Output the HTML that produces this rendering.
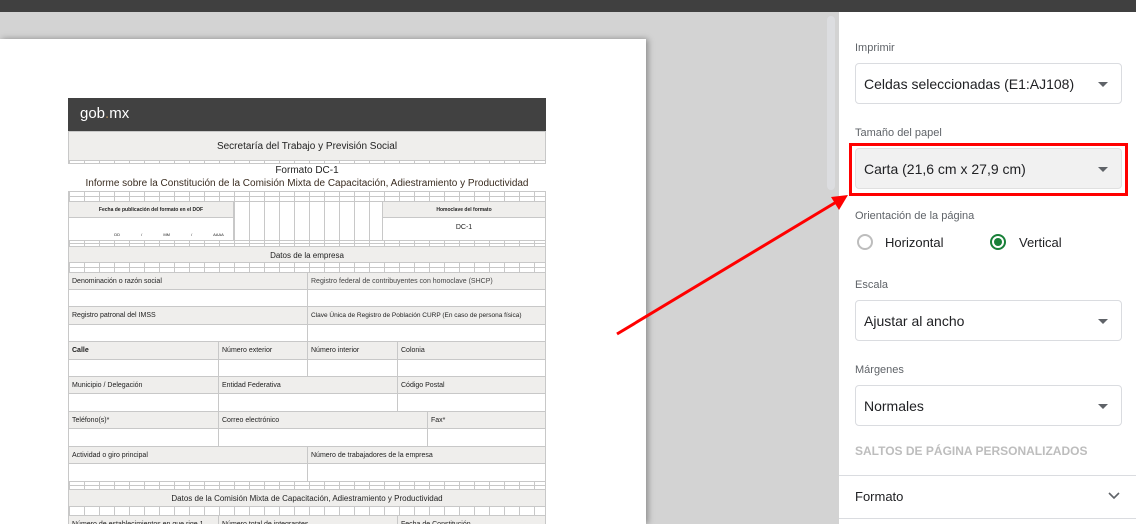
<!DOCTYPE html>
<html><head><meta charset="utf-8"><style>
*{margin:0;padding:0;box-sizing:border-box}
html,body{width:1136px;height:524px;overflow:hidden}
body{background:#d3d3d3;font-family:"Liberation Sans",Arial,sans-serif;position:relative}
.a{position:absolute}
.top{left:0;top:0;width:1136px;height:12px;background:#404040}
.page{left:0;top:39px;width:646px;height:485px;background:#fff;box-shadow:2px 0 6px rgba(0,0,0,.35)}
.c{position:absolute;border:1px solid #c8c8c8;font-size:7px;color:#222;padding:5px 3px 0;white-space:nowrap;overflow:hidden}
.g{background:#efeeec}
.grid{position:absolute;left:68px;width:478px;background-image:repeating-linear-gradient(90deg,#c8c8c8 0 1px,transparent 1px 15px);border:1px solid #c8c8c8}
.panel{left:839px;top:12px;width:297px;height:512px;background:#fff}
.lbl{position:absolute;left:16px;font-size:11px;color:#5f6368}
.sel{position:absolute;left:16px;width:267px;height:41px;border:1px solid #dadce0;border-radius:4px;font-size:14px;color:#202124;padding:12px 8px}
.sel:after{content:"";position:absolute;right:13px;top:18px;border:5px solid transparent;border-top:5px solid #5f6368;border-bottom:0}
</style></head><body>
<div class="a top"></div>
<div class="a" style="left:827px;top:16px;width:8px;height:174px;background:#dcdde0;border-radius:4px"></div>
<div class="a page"></div>
<div class="a" style="left:68px;top:98px;width:478px;height:33px;background:#414141;color:#fff;font-size:15px;padding:7px 12px">gob<span style="color:#b38e5d">.</span>mx</div>
<div class="c g" style="left:68px;top:131px;width:478px;height:30px;font-size:10px;text-align:center;padding-top:9px">Secretaría del Trabajo y Previsión Social</div>
<div class="grid" style="top:160px;height:4px"></div>
<div class="a" style="left:68px;top:164px;width:478px;font-size:10px;text-align:center;line-height:13px;color:#222">Formato DC-1<br><span style="color:#3a2c20">Informe sobre la Constitución de la Comisión Mixta de Capacitación, Adiestramiento y Productividad</span></div>
<div class="grid" style="top:191px;height:6px"></div>
<div class="grid" style="top:196px;height:6px"></div>
<div class="c g" style="left:68px;top:201px;width:166px;height:17px;font-size:5px;font-weight:bold;text-align:center">Fecha de publicación del formato en el DOF</div>
<div class="c" style="left:68px;top:217px;width:166px;height:24px;font-size:4px;padding-top:14px;word-spacing:20px">&nbsp;&nbsp;DD / MM / AAAA</div>
<div class="grid" style="top:201px;left:233px;width:150px;height:40px;background-color:#fff"></div>
<div class="c g" style="left:382px;top:201px;width:164px;height:17px;font-size:5px;font-weight:bold;text-align:center">Homoclave del formato</div>
<div class="c" style="left:382px;top:217px;width:164px;height:24px;font-size:7px;text-align:center;padding-top:6px">DC-1</div>
<div class="grid" style="top:240px;height:4px"></div>
<div class="grid" style="top:243px;height:4px"></div>
<div class="c g" style="left:68px;top:246px;width:478px;height:17px;font-size:8px;text-align:center;padding-top:4px">Datos de la empresa</div>
<div class="grid" style="top:262px;height:6px"></div>
<div class="grid" style="top:267px;height:6px"></div>
<div class="c g" style="left:68px;top:272px;width:240px;height:18px">Denominación o razón social</div>
<div class="c g" style="left:307px;top:272px;width:239px;height:18px;color:#444">Registro federal de contribuyentes con homoclave (SHCP)</div>
<div class="c" style="left:68px;top:289px;width:240px;height:18px"></div><div class="c" style="left:307px;top:289px;width:239px;height:18px"></div>
<div class="c g" style="left:68px;top:306px;width:240px;height:19px">Registro patronal del IMSS</div>
<div class="c g" style="left:307px;top:306px;width:239px;height:19px;font-size:6.5px">Clave Única de Registro de Población CURP (En caso de persona física)</div>
<div class="c" style="left:68px;top:324px;width:240px;height:18px"></div><div class="c" style="left:307px;top:324px;width:239px;height:18px"></div>
<div class="c g" style="left:68px;top:341px;width:151px;height:19px;font-weight:bold">Calle</div>
<div class="c g" style="left:218px;top:341px;width:90px;height:19px">Número exterior</div>
<div class="c g" style="left:307px;top:341px;width:91px;height:19px">Número interior</div>
<div class="c g" style="left:397px;top:341px;width:149px;height:19px">Colonia</div>
<div class="c" style="left:68px;top:359px;width:151px;height:18px"></div><div class="c" style="left:218px;top:359px;width:90px;height:18px"></div><div class="c" style="left:307px;top:359px;width:91px;height:18px"></div><div class="c" style="left:397px;top:359px;width:149px;height:18px"></div>
<div class="c g" style="left:68px;top:376px;width:151px;height:18px">Municipio / Delegación</div>
<div class="c g" style="left:218px;top:376px;width:180px;height:18px">Entidad Federativa</div>
<div class="c g" style="left:397px;top:376px;width:149px;height:18px">Código Postal</div>
<div class="c" style="left:68px;top:393px;width:151px;height:19px"></div><div class="c" style="left:218px;top:393px;width:180px;height:19px"></div><div class="c" style="left:397px;top:393px;width:149px;height:19px"></div>
<div class="c g" style="left:68px;top:411px;width:151px;height:18px">Teléfono(s)*</div>
<div class="c g" style="left:218px;top:411px;width:210px;height:18px">Correo electrónico</div>
<div class="c g" style="left:427px;top:411px;width:119px;height:18px">Fax*</div>
<div class="c" style="left:68px;top:428px;width:151px;height:19px"></div><div class="c" style="left:218px;top:428px;width:210px;height:19px"></div><div class="c" style="left:427px;top:428px;width:119px;height:19px"></div>
<div class="c g" style="left:68px;top:446px;width:240px;height:18px">Actividad o giro principal</div>
<div class="c g" style="left:307px;top:446px;width:239px;height:18px">Número de trabajadores de la empresa</div>
<div class="c" style="left:68px;top:463px;width:240px;height:19px"></div><div class="c" style="left:307px;top:463px;width:239px;height:19px"></div>
<div class="grid" style="top:481px;height:5px"></div>
<div class="grid" style="top:485px;height:5px"></div>
<div class="c g" style="left:68px;top:489px;width:478px;height:18px;font-size:8px;text-align:center;padding-top:4px">Datos de la Comisión Mixta de Capacitación, Adiestramiento y Productividad</div>
<div class="grid" style="top:506px;height:10px"></div>
<div class="c g" style="left:68px;top:515px;width:151px;height:18px">Número de establecimientos en que rige 1</div>
<div class="c g" style="left:218px;top:515px;width:180px;height:18px">Número total de integrantes</div>
<div class="c g" style="left:397px;top:515px;width:149px;height:18px">Fecha de Constitución</div>

<div class="a panel">
<div class="lbl" style="top:30px">Imprimir</div>
<div class="sel" style="top:51px">Celdas seleccionadas (E1:AJ108)</div>
<div class="lbl" style="top:115px">Tamaño del papel</div>
<div class="sel" style="top:136px;background:#f1f1f1;border-color:#e0e0e0">Carta (21,6 cm x 27,9 cm)</div>
<div class="a" style="left:10px;top:131px;width:279px;height:53px;border:3px solid #f00"></div>
<div class="lbl" style="top:198px">Orientación de la página</div>
<div class="a" style="left:18px;top:222px;width:16px;height:16px;border:2px solid #bdbdbd;border-radius:50%"></div>
<div class="a" style="left:46px;top:223px;font-size:13px;color:#202124">Horizontal</div>
<div class="a" style="left:151px;top:222px;width:16px;height:16px;border:2px solid #188038;border-radius:50%"><div style="margin:2px;width:8px;height:8px;border-radius:50%;background:#188038"></div></div>
<div class="a" style="left:180px;top:223px;font-size:13px;color:#202124">Vertical</div>
<div class="lbl" style="top:267px">Escala</div>
<div class="sel" style="top:288px">Ajustar al ancho</div>
<div class="lbl" style="top:352px">Márgenes</div>
<div class="sel" style="top:373px">Normales</div>
<div class="a" style="left:16px;top:432px;font-size:12px;font-weight:bold;color:#bdbdbd">SALTOS DE PÁGINA PERSONALIZADOS</div>
<div class="a" style="left:0;top:463px;width:297px;border-top:1px solid #dadce0"></div>
<div class="a" style="left:16px;top:477px;font-size:13px;color:#202124">Formato</div>
<svg class="a" style="left:268px;top:479px" width="14" height="10"><path d="M2 2l5 5 5-5" stroke="#5f6368" stroke-width="1.6" fill="none"/></svg>
<div class="a" style="left:0;top:506px;width:297px;border-top:1px solid #dadce0"></div>
</div>
<svg class="a" style="left:0;top:0" width="1136" height="524"><line x1="617" y1="334" x2="838" y2="201" stroke="#f00" stroke-width="3"/><polygon points="848,195 831,197 839,210" fill="#f00"/></svg>
</body></html>
